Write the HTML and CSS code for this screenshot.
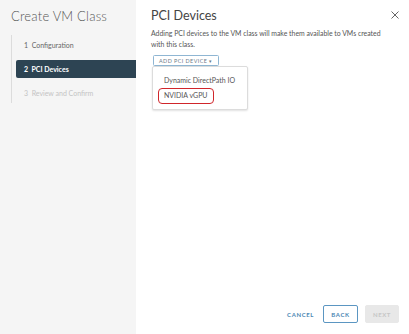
FILE: index.html
```html
<!DOCTYPE html>
<html lang="en">
<head>
    <meta charset="UTF-8">
    <title>Create VM Class</title>
    <link rel="stylesheet" href="styles.css">
</head>
<body>

<div class="modal">
    <!-- Wizard steps -->
    <div class="sidebar">
        <h1 class="wizard-title">Create VM Class</h1>
        <ul class="steps">
            <li class="step">1&nbsp;&nbsp;Configuration</li>
            <li class="step active">2&nbsp;&nbsp;PCI Devices</li>
            <li class="step disabled">3&nbsp;&nbsp;Review and Confirm</li>
        </ul>
    </div>

    <!-- Step content -->
    <div class="main">
        <div class="header">
            <h2>PCI Devices</h2>
            <button class="close" aria-label="Close">
                <svg width="8" height="8" viewBox="0 0 8 8"><path d="M0.5 0.5 L7.5 7.5 M7.5 0.5 L0.5 7.5" stroke="#666" stroke-width="1" fill="none"/></svg>
            </button>
        </div>
        <p class="desc">Adding PCI devices to the VM class will make them available to VMs created with this class.</p>

        <div class="dropdown">
            <button class="add-btn">ADD PCI DEVICE <span class="caret">&#9662;</span></button>
            <div class="menu">
                <div class="menu-item">Dynamic DirectPath IO</div>
                <div class="menu-item highlight">NVIDIA vGPU</div>
            </div>
        </div>

        <div class="footer">
            <button class="btn-link">CANCEL</button>
            <button class="btn-outline">BACK</button>
            <button class="btn-disabled">NEXT</button>
        </div>
    </div>
</div>

</body>
</html>
```

FILE: styles.css
```css
body {
    margin: 0;
    padding: 0;
    font-family: Lato, 'Noto Sans', sans-serif;
    background-color: #fff;
}

.modal {
    display: flex;
    width: 409px;
    height: 334px;
    overflow: hidden;
}

/* Left column with the wizard steps */
.sidebar {
    width: 136px;
    background-color: #f5f5f5;
    flex-shrink: 0;
}

.wizard-title {
    margin: 9px 0 0 11px;
    font-size: 13px;
    font-weight: 300;
    color: #555;
    line-height: 14px;
    letter-spacing: 0.2px;
}

.steps {
    list-style: none;
    margin: 12px 0 0 11px;
    padding: 1px 0 1px 4px;
    border-left: 1.5px solid #dcdcdc;
}

.step {
    height: 18px;
    line-height: 18px;
    padding-left: 8px;
    font-size: 7px;
    color: #666;
    margin-bottom: 6px;
}

.step.active {
    background-color: #2d4453;
    color: #fff;
    font-weight: 700;
    border-radius: 2px 0 0 2px;
}

.step.disabled {
    color: #c4c4c4;
    margin-bottom: 0;
}

/* Right column */
.main {
    flex: 1;
    display: flex;
    flex-direction: column;
    padding: 0 10px 0 15px;
}

.header {
    display: flex;
    justify-content: space-between;
    align-items: center;
    margin-top: 8px;
}

h2 {
    margin: 0;
    font-size: 12.5px;
    font-weight: 400;
    color: #444;
    line-height: 16px;
}

.close {
    background: none;
    border: none;
    padding: 0;
    cursor: pointer;
    line-height: 0;
    margin-top: -2px;
}

.desc {
    margin: 4px 0 0 0;
    font-size: 6.9px;
    line-height: 11px;
    color: #555;
    width: 232px;
}

.dropdown {
    margin-top: 5px;
    margin-left: 2px;
}

.add-btn {
    display: block;
    height: 11px;
    padding: 0 5px;
    font-family: Lato, 'Noto Sans', sans-serif;
    font-size: 5.4px;
    letter-spacing: 0.45px;
    color: #6b7a87;
    background: #fff;
    border: 1px solid #8fb6d3;
    border-radius: 1.5px;
}

.caret {
    font-size: 5px;
}

.menu {
    margin-top: 0;
    margin-left: -1px;
    width: 94px;
    border: 1px solid #dcdcdc;
    border-radius: 2px;
    background: #fff;
    box-shadow: 0 1px 2px rgba(0, 0, 0, 0.12);
    padding: 6px 0 5px 0;
}

.menu-item {
    font-size: 7px;
    color: #555;
    padding-left: 11px;
    height: 14px;
    line-height: 14px;
}

.menu-item.highlight {
    box-sizing: border-box;
    margin: 1px 0 0 5px;
    padding-left: 5px;
    width: 56px;
    height: 16px;
    line-height: 13px;
    border: 1.5px solid #d0262b;
    border-radius: 4px;
}

.footer {
    margin-top: auto;
    margin-bottom: 11px;
    display: flex;
    justify-content: flex-end;
    align-items: center;
    gap: 7px;
}

.footer button {
    height: 18px;
    padding: 0;
    font-family: Lato, 'Noto Sans', sans-serif;
    font-size: 6px;
    font-weight: 700;
    letter-spacing: 0.6px;
    border-radius: 2px;
}

.btn-link {
    background: none;
    border: none;
    color: #4c87b3;
    margin-right: 2px;
}

.btn-outline {
    width: 35px;
    background: #fff;
    border: 1px solid #5b96c2;
    color: #4c87b3;
}

.btn-disabled {
    width: 34px;
    background: #e8e8e8;
    border: 1px solid #e8e8e8;
    color: #c6c6c6;
}
```
